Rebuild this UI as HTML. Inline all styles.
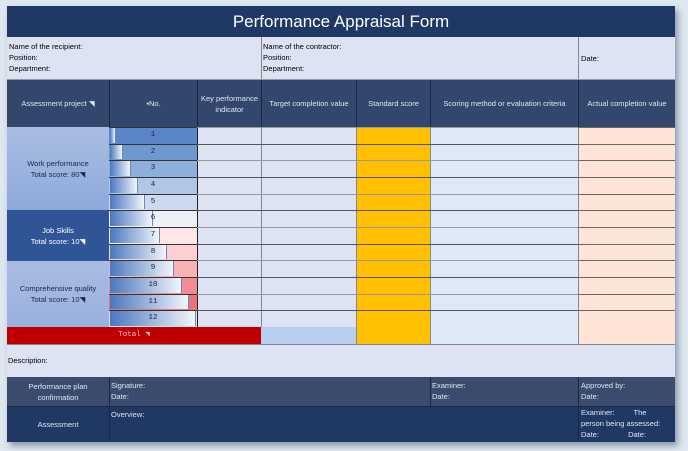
<!DOCTYPE html><html><head><style>
body{margin:0;width:688px;height:451px;background:#dfe7f0;font-family:"Liberation Sans",sans-serif;position:relative;overflow:hidden}
.a{position:absolute;box-sizing:border-box}
.t{font-size:7.5px;line-height:11px}
.c{display:flex;align-items:center;justify-content:center;text-align:center}
.w{color:#fff}
.d{color:#dfe6f3}
</style></head><body>
<div class="a" style="left:7px;top:6px;width:668px;height:436px;box-shadow:3px 4px 6px rgba(60,80,110,.5);background:#dde3f3"></div>
<div class="a c" style="left:7px;top:6px;width:668px;height:31px;background:#1f3864;color:#fff;font-size:17px">Performance Appraisal Form</div>
<div class="a t" style="left:7px;top:37px;width:254px;height:43px;background:#dde3f3;border-bottom:1px solid #999;padding:4px 2px">Name of the recipient:<br>Position:<br>Department:</div>
<div class="a t" style="left:261px;top:37px;width:317px;height:43px;background:#dde3f3;border-left:1px solid #888;border-bottom:1px solid #999;padding:4px 1px">Name of the contractor:<br>Position:<br>Department:</div>
<div class="a t" style="left:578px;top:37px;width:97px;height:43px;background:#dde3f3;border-left:1px solid #888;border-bottom:1px solid #999;padding:16px 2px">Date:</div>
<!-- header -->
<div class="a" style="left:7px;top:80px;width:668px;height:47px;background:#33466e"></div>
<div class="a t c d" style="left:7px;top:80px;width:102px;height:47px">Assessment project ◥</div>
<div class="a t c d" style="left:109px;top:80px;width:88px;height:47px;border-left:1px solid #1a2844">▪No.</div>
<div class="a t c d" style="left:197px;top:80px;width:64px;height:47px;border-left:1px solid #1a2844">Key performance indicator</div>
<div class="a t c d" style="left:261px;top:80px;width:95px;height:47px;border-left:1px solid #1a2844">Target completion value</div>
<div class="a t c d" style="left:356px;top:80px;width:74px;height:47px;border-left:1px solid #1a2844">Standard score</div>
<div class="a t c d" style="left:430px;top:80px;width:148px;height:47px;border-left:1px solid #1a2844">Scoring method or evaluation criteria</div>
<div class="a t c d" style="left:578px;top:80px;width:97px;height:47px;border-left:1px solid #1a2844">Actual completion value</div>
<!-- body columns -->
<div class="a" style="left:197px;top:127px;width:64px;height:200px;background:#dde3f3;border-left:1px solid #222"></div>
<div class="a" style="left:261px;top:127px;width:95px;height:200px;background:#dde3f3;border-left:1px solid #888"></div>
<div class="a" style="left:356px;top:127px;width:74px;height:217px;background:#ffc000;border-left:1px solid #888"></div>
<div class="a" style="left:430px;top:127px;width:148px;height:217px;background:#dde9f5;border-left:1px solid #888"></div>
<div class="a" style="left:578px;top:127px;width:97px;height:217px;background:#fde4d6;border-left:1px solid #888"></div>
<div class="a t c" style="left:7px;top:127px;width:102px;height:83px;background:linear-gradient(#a9bde3,#8eaadb);color:#1a2844">Work performance<br>Total score: 80◥</div>
<div class="a t c w" style="left:7px;top:210px;width:102px;height:51px;background:#2f5597">Job Skills<br>Total score: 10◥</div>
<div class="a t c" style="left:7px;top:261px;width:102px;height:66px;background:linear-gradient(#a9bde3,#9ab0de);color:#1a2844">Comprehensive quality<br>Total score: 10◥</div>
<div id="rows"></div>
<div class="a t c" style="left:7px;top:327px;width:254px;height:17px;background:#c00000;color:#f4c0c0;font-family:'Liberation Mono',monospace">Total ◥</div>
<div class="a" style="left:261px;top:327px;width:95px;height:17px;background:#b8d0ef"></div>
<div class="a t" style="left:7px;top:344px;width:668px;height:33px;background:#dde3f3;border-top:1px solid #888;padding:10px 1px">Description:</div>
<div class="a" style="left:7px;top:377px;width:668px;height:29px;background:#3a4b6e"></div>
<div class="a t c d" style="left:7px;top:377px;width:102px;height:29px">Performance plan confirmation</div>
<div class="a t d" style="left:109px;top:377px;width:321px;height:29px;border-left:1px solid #1a2844;padding:3px 1px">Signature:<br>Date:</div>
<div class="a t d" style="left:430px;top:377px;width:148px;height:29px;border-left:1px solid #1a2844;padding:3px 1px">Examiner:<br>Date:</div>
<div class="a t d" style="left:578px;top:377px;width:97px;height:29px;border-left:1px solid #1a2844;padding:3px 2px">Approved by:<br>Date:</div>
<div class="a" style="left:7px;top:406px;width:668px;height:36px;background:#203864;border-top:1px solid #1a2844"></div>
<div class="a t c d" style="left:7px;top:406px;width:102px;height:36px">Assessment</div>
<div class="a t d" style="left:109px;top:406px;width:469px;height:36px;border-left:1px solid #152848;padding:3px 1px">Overview:</div>
<div class="a t d" style="left:578px;top:406px;width:97px;height:36px;border-left:1px solid #152848;padding:1px 2px">Examiner:&nbsp;&nbsp;&nbsp;&nbsp;&nbsp;&nbsp;&nbsp;&nbsp;&nbsp;The<br>person being assessed:<br>Date:&nbsp;&nbsp;&nbsp;&nbsp;&nbsp;&nbsp;&nbsp;&nbsp;&nbsp;&nbsp;&nbsp;&nbsp;&nbsp;&nbsp;Date:</div>
<script>
var bg=['#5a86c8','#7098d0','#8eaedb','#b0c6e6','#ccd9ee','#eef0f8','#fde6e8','#fcd0d3','#f8b2b6','#f08c92','#e8737a','#dde3f3'];
var h='';for(var i=0;i<12;i++){var y=127+Math.round(i*200/12),y2=127+Math.round((i+1)*200/12),hh=y2-y;var bw=Math.round(6+i*7.3);
h+='<div class="a" style="left:109px;top:'+y+'px;width:88px;height:'+hh+'px;background:'+bg[i]+';border-top:1px solid #333"></div>';
h+='<div class="a" style="left:110px;top:'+(y+1)+'px;width:'+bw+'px;height:'+(hh-2)+'px;background:linear-gradient(90deg,#4a78c0,#f2f5fb);border-right:1px solid #6a88b8"></div>';
h+='<div class="a t c" style="left:109px;top:'+y+'px;width:88px;height:'+hh+'px;font-family:\'Liberation Mono\',monospace;color:#223">'+(i+1)+'</div>';
h+='<div class="a" style="left:197px;top:'+y+'px;width:381px;height:1px;background:'+(i%2?'#555':'#999')+'"></div>';
h+='<div class="a" style="left:578px;top:'+y+'px;width:97px;height:1px;background:#666"></div>';}
document.getElementById('rows').outerHTML=h;
</script>
</body></html>
